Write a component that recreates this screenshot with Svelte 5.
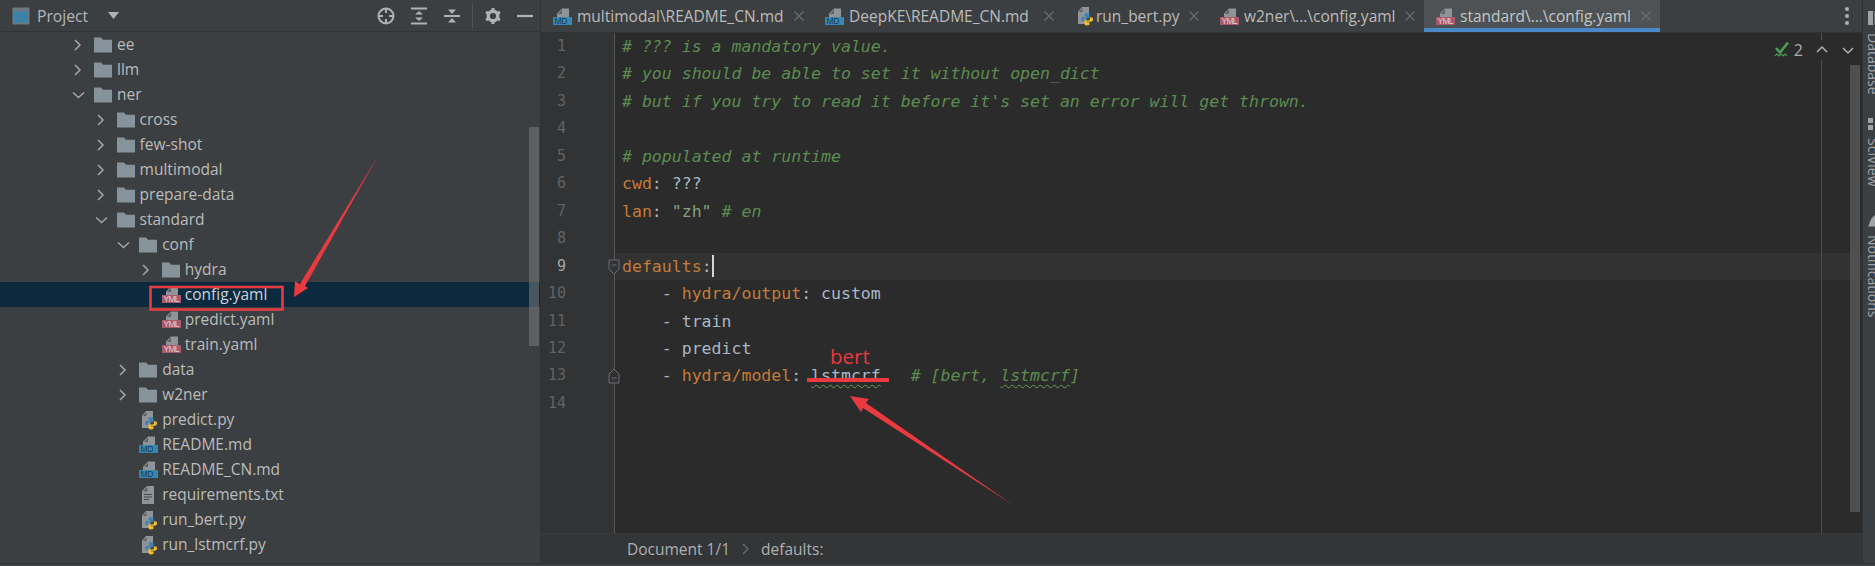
<script>
	const tree = [
		{ d: 0, name: 'ee', arrow: 'r' },
		{ d: 0, name: 'llm', arrow: 'r' },
		{ d: 0, name: 'ner', arrow: 'd' },
		{ d: 1, name: 'cross', arrow: 'r' },
		{ d: 1, name: 'few-shot', arrow: 'r' },
		{ d: 1, name: 'multimodal', arrow: 'r' },
		{ d: 1, name: 'prepare-data', arrow: 'r' },
		{ d: 1, name: 'standard', arrow: 'd' },
		{ d: 2, name: 'conf', arrow: 'd' },
		{ d: 3, name: 'hydra', arrow: 'r' },
		{ d: 3, name: 'config.yaml', kind: 'yml', selected: true },
		{ d: 3, name: 'predict.yaml', kind: 'yml' },
		{ d: 3, name: 'train.yaml', kind: 'yml' },
		{ d: 2, name: 'data', arrow: 'r' },
		{ d: 2, name: 'w2ner', arrow: 'r' },
		{ d: 2, name: 'predict.py', kind: 'py' },
		{ d: 2, name: 'README.md', kind: 'md' },
		{ d: 2, name: 'README_CN.md', kind: 'md' },
		{ d: 2, name: 'requirements.txt', kind: 'txt' },
		{ d: 2, name: 'run_bert.py', kind: 'py' },
		{ d: 2, name: 'run_lstmcrf.py', kind: 'py' }
	]

	const tabs = [
		{ name: 'multimodal\\README_CN.md', kind: 'md', w: 272 },
		{ name: 'DeepKE\\README_CN.md', kind: 'md', w: 250 },
		{ name: 'run_bert.py', kind: 'py', w: 145 },
		{ name: 'w2ner\\...\\config.yaml', kind: 'yml', w: 216 },
		{ name: 'standard\\...\\config.yaml', kind: 'yml', w: 236, active: true }
	]

	// c comment, k key, t plain, s string, w comment with typo squiggle
	const lines = [
		[['c', "# ??? is a mandatory value."]],
		[['c', "# you should be able to set it without open_dict"]],
		[['c', "# but if you try to read it before it's set an error will get thrown."]],
		[],
		[['c', "# populated at runtime"]],
		[['k', 'cwd'], ['t', ': ???']],
		[['k', 'lan'], ['t', ': '], ['s', '"zh"'], ['c', ' # en']],
		[],
		[['k', 'defaults'], ['t', ':']],
		[['t', '    - '], ['k', 'hydra/output'], ['t', ': custom']],
		[['t', '    - train']],
		[['t', '    - predict']],
		[['t', '    - '], ['k', 'hydra/model'], ['t', ': '], ['t w', 'lstmcrf'], ['t', '   '], ['c', '# [bert, '], ['c w', 'lstmcrf'], ['c', ']']],
		[]
	]
</script>

{#snippet folder()}
	<svg class="ico" width="18" height="16" viewBox="0 0 18 16"><path d="M0 0.500h7l2 2.200h9V15.500H0z" fill="#87939a"/></svg>
{/snippet}

{#snippet fileIcon(kind)}
	{#if kind === 'yml' || kind === 'md'}
		<svg class="ico" width="19" height="19" viewBox="0 0 19 19">
			<path d="M9 1.500h7V10H4V6.500z" fill="#8f9498"/>
			<path d="M9 2.500v4.500H5z" fill="#5c6063"/>
			<rect x="0" y="10" width="19" height="8" fill={kind === 'yml' ? '#a9596d' : '#3a87ad'}/>
			{#if kind === 'yml'}
				<text x="9.500" y="16.800" class="badge" fill="#e7ccd3" text-anchor="middle" textLength="16">YML</text>
			{:else}
				<text x="8" y="16.800" class="badge" fill="#17405a" text-anchor="middle" textLength="13">MD</text>
			{/if}
		</svg>
	{:else if kind === 'py'}
		<svg class="ico" width="19" height="20" viewBox="0 0 19 20">
			<path d="M7 1h7v7h-2.500v10H3V5.500z" fill="#8f9498"/>
			<path d="M7.500 2v4H4z" fill="#5c6063"/>
			<g transform="translate(6 7)">
				<path d="M6 0C3.500 0 3.500 1 3.500 2V3.300H6.200V3.900H2C.8 3.900 0 4.800 0 6.100 0 7.500.8 8.300 2 8.300H3V6.800C3 5.900 3.800 5.200 4.600 5.200H7.400C8.100 5.200 8.600 4.600 8.600 3.900V2C8.600.8 7.500 0 6 0Z" fill="#3e83b3"/>
				<path d="M6 0C3.500 0 3.500 1 3.500 2V3.300H6.200V3.900H2C.8 3.900 0 4.800 0 6.100 0 7.500.8 8.300 2 8.300H3V6.800C3 5.900 3.800 5.200 4.600 5.200H7.400C8.100 5.200 8.600 4.600 8.600 3.900V2C8.600.8 7.500 0 6 0Z" fill="#eebf2b" transform="rotate(180 6 6.300)"/>
			</g>
		</svg>
	{:else}
		<svg class="ico" width="19" height="20" viewBox="0 0 19 20">
			<path d="M8 1h7v18H3V6z" fill="#8f9498"/>
			<path d="M8.500 2v4.500H4z" fill="#5c6063"/>
			<path d="M5 9.500h8M5 12h8M5 14.500h5" stroke="#45484a" stroke-width="1.200"/>
		</svg>
	{/if}
{/snippet}

{#snippet chevron(dir)}
	<svg class="chev" width="16" height="14" viewBox="0 0 16 14">
		{#if dir === 'r'}
			<path d="M5 2l5 5-5 5" fill="none" stroke="#a3a6a8" stroke-width="1.500"/>
		{:else if dir === 'd'}
			<path d="M3 4.500l5.500 5 5.500-5" fill="none" stroke="#a3a6a8" stroke-width="1.500"/>
		{/if}
	</svg>
{/snippet}

<div class="app">
	<div class="main">
		<aside class="side">
			<header class="side-head">
				<div class="title">
					<svg width="18" height="18" viewBox="0 0 18 18"><rect x="0.500" y="0.500" width="17" height="17" rx="1" fill="#6b7a83"/><rect x="2" y="4.500" width="14" height="11" fill="#3c82a8"/></svg>
					<span>Project</span>
					<svg class="drop" width="11" height="7" viewBox="0 0 11 7"><path d="M0 0h11L5.500 7z" fill="#afb1b3"/></svg>
				</div>
				<div class="tools">
					<svg width="18" height="18" viewBox="0 0 18 18"><circle cx="9" cy="9" r="7.500" fill="none" stroke="#afb1b3" stroke-width="2"/><path d="M9 1v5M9 12v5M1 9h5M12 9h5" stroke="#afb1b3" stroke-width="2"/></svg>
					<svg width="18" height="18" viewBox="0 0 18 18"><path d="M1 1.500h16M1 16.500h16" stroke="#afb1b3" stroke-width="2.200"/><path d="M9 4l4 3.500H5zM9 14l4-3.500H5z" fill="#afb1b3"/></svg>
					<svg width="18" height="18" viewBox="0 0 18 18"><path d="M1 9h16" stroke="#afb1b3" stroke-width="2"/><path d="M9 7l-4-4.500h8zM9 11l-4 4.500h8z" fill="#afb1b3"/></svg>
					<i class="sep"></i>
					<svg width="18" height="18" viewBox="0 0 18 18"><circle cx="9" cy="9" r="4.800" fill="none" stroke="#afb1b3" stroke-width="3.400"/><path d="M9 1v3M9 14v3M2 5l2.600 1.500M13.400 11.500L16 13M2 13l2.600-1.500M13.400 6.500L16 5" stroke="#afb1b3" stroke-width="3"/></svg>
					<svg width="16" height="18" viewBox="0 0 16 18"><path d="M0 9h16" stroke="#afb1b3" stroke-width="2.200"/></svg>
				</div>
			</header>
			<div class="tree">
				{#each tree as row (row.name + row.d)}
					<div class="row" class:selected={row.selected} style="padding-left: {70 + row.d * 22.6}px">
						{@render chevron(row.arrow)}
						{#if row.kind}
							<span class="slot">{@render fileIcon(row.kind)}</span>
						{:else}
							<span class="slot">{@render folder()}</span>
						{/if}
						<span class="label">{row.name}</span>
					</div>
				{/each}
				<div class="side-scroll"></div>
			</div>
		</aside>

		<section class="editor">
			<nav class="tabs">
				{#each tabs as tab (tab.name)}
					<div class="tab" class:active={tab.active} style="width: {tab.w}px">
						<span class="tab-ico" class:narrow={tab.kind === 'py'}>{@render fileIcon(tab.kind)}</span>
						<span>{tab.name}</span>
						<svg class="close" width="12" height="12" viewBox="0 0 12 12"><path d="M1.500 1.500l9 9M10.500 1.500l-9 9" stroke="#6a6d6f" stroke-width="1.200"/></svg>
					</div>
				{/each}
				<div class="more"><i></i><i></i><i></i></div>
			</nav>

			<div class="body">
				<div class="gutter">
					{#each lines as _, i}
						<div class="num" class:now={i === 8}>
							{i + 1}
							{#if i === 8}
								<svg class="fold" width="14" height="16" viewBox="0 0 14 16"><path d="M2 1h10v9l-5 5-5-5z" fill="#313335" stroke="#6a6d70"/><path d="M4.500 6h5" stroke="#6a6d70"/></svg>
							{:else if i === 12}
								<svg class="fold" width="14" height="16" viewBox="0 0 14 16"><path d="M2 15h10V6L7 1 2 6z" fill="#313335" stroke="#6a6d70"/><path d="M4.500 10h5" stroke="#6a6d70"/></svg>
							{/if}
						</div>
					{/each}
				</div>
				<div class="code">
					{#each lines as toks, i}
						<div class="ln" class:now={i === 8}>{#each toks as [cls, text]}<span class={cls}>{text}</span>{/each}{#if i === 8}<i class="caret"></i>{/if}</div>
					{/each}
				</div>
				<div class="margin-line"></div>
				<div class="code-scroll"></div>
				<div class="widget">
					<svg width="16" height="18" viewBox="0 0 16 18"><path d="M2 7l4 4.500L14 1.500" fill="none" stroke="#499c54" stroke-width="2.600"/><path d="M1 15l2-2 2 2 2-2 2 2 2-2 2 2" fill="none" stroke="#499c54" stroke-width="1.100"/></svg>
					<span>2</span>
					<svg class="up" width="14" height="10" viewBox="0 0 14 10"><path d="M2 7l5-5 5 5" fill="none" stroke="#afb1b3" stroke-width="1.500"/></svg>
					<svg class="down" width="14" height="10" viewBox="0 0 14 10"><path d="M2 3l5 5 5-5" fill="none" stroke="#afb1b3" stroke-width="1.500"/></svg>
				</div>
			</div>

			<footer class="crumbs">
				<span>Document 1/1</span>
				<svg width="7" height="12" viewBox="0 0 7 12"><path d="M1 1l5 5-5 5" fill="none" stroke="#6a6d70" stroke-width="1.200"/></svg>
				<span>defaults:</span>
			</footer>
		</section>

		<aside class="strip">
			<svg class="s1" width="12" height="16" viewBox="0 0 12 16"><path d="M0 1h5v14H0zM6.500 1h2.500v14H6.500zM10 1h2v14h-2z" fill="#a0a3a5"/></svg>
			<span class="vt t1">Database</span>
			<svg class="s2" width="12" height="12" viewBox="0 0 12 12"><path d="M0 0h5v5H0zM7 0h5v5H7zM0 7h5v5H0zM7 7h5v5H7z" fill="#a0a3a5"/></svg>
			<span class="vt t2">SciView</span>
			<svg class="s3" width="12" height="13" viewBox="0 0 12 13"><path d="M0 12.500C2 10 2 4 7 1h5v11.500z" fill="#a0a3a5"/></svg>
			<span class="vt t3">Notifications</span>
		</aside>
	</div>
	<div class="status"></div>

	<svg class="marks" width="1875" height="566" viewBox="0 0 1875 566">
		<rect x="150.500" y="287" width="132" height="22.500" fill="none" stroke="#e53d43" stroke-width="2.600"/>
		<polygon points="378,156 305,286 308,288 294,297 295,281 300,284" fill="#ea3a40"/>
		<polygon points="850,396 869,399 866,403 1013,505 863,408 861,412" fill="#ea3a40"/>
		<rect x="807" y="378" width="82" height="4" fill="#ea3a40"/>
		<text x="830" y="364" class="bert">bert</text>
	</svg>
</div>

<style>
	:global(body) {
		margin: 0;
		background: #3c3f41;
		overflow: hidden;
	}

	.app {
		position: relative;
		width: 1875px;
		height: 566px;
		overflow: hidden;
		display: flex;
		flex-direction: column;
		font-family: "Open Sans", "Noto Sans", sans-serif;
		font-size: 15.500px;
		color: #bbbbbb;
	}

	.main {
		flex: 1;
		display: flex;
		min-height: 0;
	}

	.status {
		height: 2px;
		border-top: 1px solid #323232;
		background: #3c3f41;
	}

	/* project panel */
	.side {
		width: 540px;
		flex: none;
		border-right: 1px solid #323232;
		background: #3c3f41;
		display: flex;
		flex-direction: column;
	}

	.side-head {
		height: 31px;
		flex: none;
		border-bottom: 1px solid #323232;
		display: flex;
		align-items: center;
		justify-content: space-between;
		padding: 0 7px 0 12px;
	}

	.title {
		display: flex;
		align-items: center;
		gap: 7px;
		font-size: 15.700px;
		color: #b4b6b8;
	}

	.drop {
		margin-left: 13px;
	}

	.tools {
		display: flex;
		align-items: center;
		gap: 15px;
	}

	.sep {
		width: 1px;
		height: 24px;
		background: #515456;
		margin: 0 -4px;
	}

	.tree {
		position: relative;
		flex: 1;
		overflow: hidden;
	}

	.row {
		height: 25px;
		display: flex;
		align-items: center;
		white-space: nowrap;
	}

	.row.selected {
		background: #0d293e;
		color: #ccd2d7;
	}

	.label {
		margin-top: -1px;
	}

	.chev {
		flex: none;
		margin-right: 8px;
	}

	.slot {
		width: 23px;
		flex: none;
		display: flex;
		align-items: center;
	}

	.ico {
		display: block;
		flex: none;
	}

	.badge {
		font-family: "Liberation Sans", sans-serif;
		font-size: 8.500px;
	}

	.side-scroll {
		position: absolute;
		left: 529px;
		top: 95px;
		width: 10px;
		height: 219px;
		background: rgba(120, 123, 125, 0.55);
	}

	/* editor */
	.editor {
		flex: 1;
		min-width: 0;
		display: flex;
		flex-direction: column;
	}

	.tabs {
		height: 32px;
		flex: none;
		display: flex;
		border-bottom: 1px solid #323232;
		background: #3c3f41;
		position: relative;
	}

	.tab {
		box-sizing: border-box;
		height: 32px;
		flex: none;
		display: flex;
		align-items: center;
		padding: 0 8px 0 12px;
		white-space: nowrap;
	}

	.tab.active {
		background: #4e5254;
		box-shadow: inset 0 -4px 0 #4a88c7;
		color: #c4c7c9;
	}

	.tab-ico {
		width: 24px;
		flex: none;
	}

	.tab-ico.narrow {
		width: 21px;
	}

	.close {
		margin-left: auto;
		flex: none;
	}

	.more {
		margin-left: auto;
		margin-right: 13px;
		display: flex;
		flex-direction: column;
		justify-content: center;
		gap: 3px;
	}

	.more i {
		width: 4px;
		height: 4px;
		border-radius: 50%;
		background: #afb1b3;
	}

	.body {
		flex: 1;
		min-height: 0;
		position: relative;
		display: flex;
		background: #2b2b2b;
		font-family: "DejaVu Sans Mono", monospace;
	}

	.gutter {
		width: 73px;
		flex: none;
		background: #313335;
		border-right: 1px solid #555759;
	}

	.num {
		position: relative;
		height: 27.460px;
		line-height: 27.460px;
		padding-right: 48px;
		text-align: right;
		font-size: 15px;
		color: #606366;
	}

	.num.now {
		color: #a4a3a3;
	}

	.fold {
		position: absolute;
		right: -7px;
		top: 6px;
		z-index: 1;
	}

	.code {
		flex: 1;
		min-width: 0;
		font-size: 16.550px;
	}

	.ln {
		position: relative;
		height: 27.460px;
		line-height: 27.460px;
		padding-left: 7px;
		white-space: pre;
		color: #a9b7c6;
	}

	.ln.now {
		background: #323232;
	}

	.caret {
		display: inline-block;
		width: 2px;
		height: 22px;
		vertical-align: -5px;
		background: #d5d5d5;
	}

	.c {
		color: #5c8c50;
		font-style: italic;
	}

	.k {
		color: #c47c38;
	}

	.s {
		color: #86a080;
	}

	.w {
		text-decoration: underline wavy #6f9a5c;
		text-decoration-thickness: 1px;
		text-underline-offset: 3px;
	}

	.margin-line {
		position: absolute;
		left: 1280px;
		top: 0;
		bottom: 0;
		width: 1px;
		background: #4c4e50;
	}

	.code-scroll {
		position: absolute;
		right: 2px;
		top: 32px;
		width: 10px;
		height: 447px;
		background: #4d4f50;
	}

	.widget {
		position: absolute;
		top: 7px;
		right: 7px;
		height: 20px;
		display: flex;
		align-items: center;
		background: #2b2b2b;
		font-family: "Open Sans", sans-serif;
		font-size: 16px;
		color: #a9abad;
		padding-left: 12px;
	}

	.widget span {
		margin: 0 0 0 4px;
	}

	.up {
		margin-left: 12px;
	}

	.down {
		margin-left: 12px;
	}

	.crumbs {
		height: 29px;
		flex: none;
		border-top: 1px solid #3a3c3e;
		background: #333537;
		display: flex;
		align-items: center;
		gap: 12px;
		padding-left: 86px;
		color: #adb0b2;
	}

	/* right tool strip */
	.strip {
		width: 12px;
		flex: none;
		border-left: 1px solid #323232;
		background: #3c3f41;
		overflow: hidden;
		display: flex;
		flex-direction: column;
		color: #a0a3a5;
		font-size: 14px;
	}

	.strip svg {
		flex: none;
		margin-left: 5px;
	}

	.s1 {
		margin-top: 10px;
	}

	.s2 {
		margin-top: 30px;
	}

	.s3 {
		margin-top: 31px;
	}

	.vt {
		writing-mode: vertical-rl;
		white-space: nowrap;
		line-height: 16px;
		width: 16px;
		flex: none;
		align-self: flex-start;
		height: 55px;
		margin-left: 2px;
	}

	.t1 {
		margin-top: 7px;
	}

	.t2 {
		margin-top: 8px;
		height: 45px;
	}

	.t3 {
		margin-top: 8px;
		height: auto;
	}

	/* red annotations pasted on top of the screenshot */
	.marks {
		position: absolute;
		inset: 0;
		pointer-events: none;
	}

	.bert {
		font-family: "Open Sans", sans-serif;
		font-size: 20.500px;
		fill: #e8383f;
	}
</style>
